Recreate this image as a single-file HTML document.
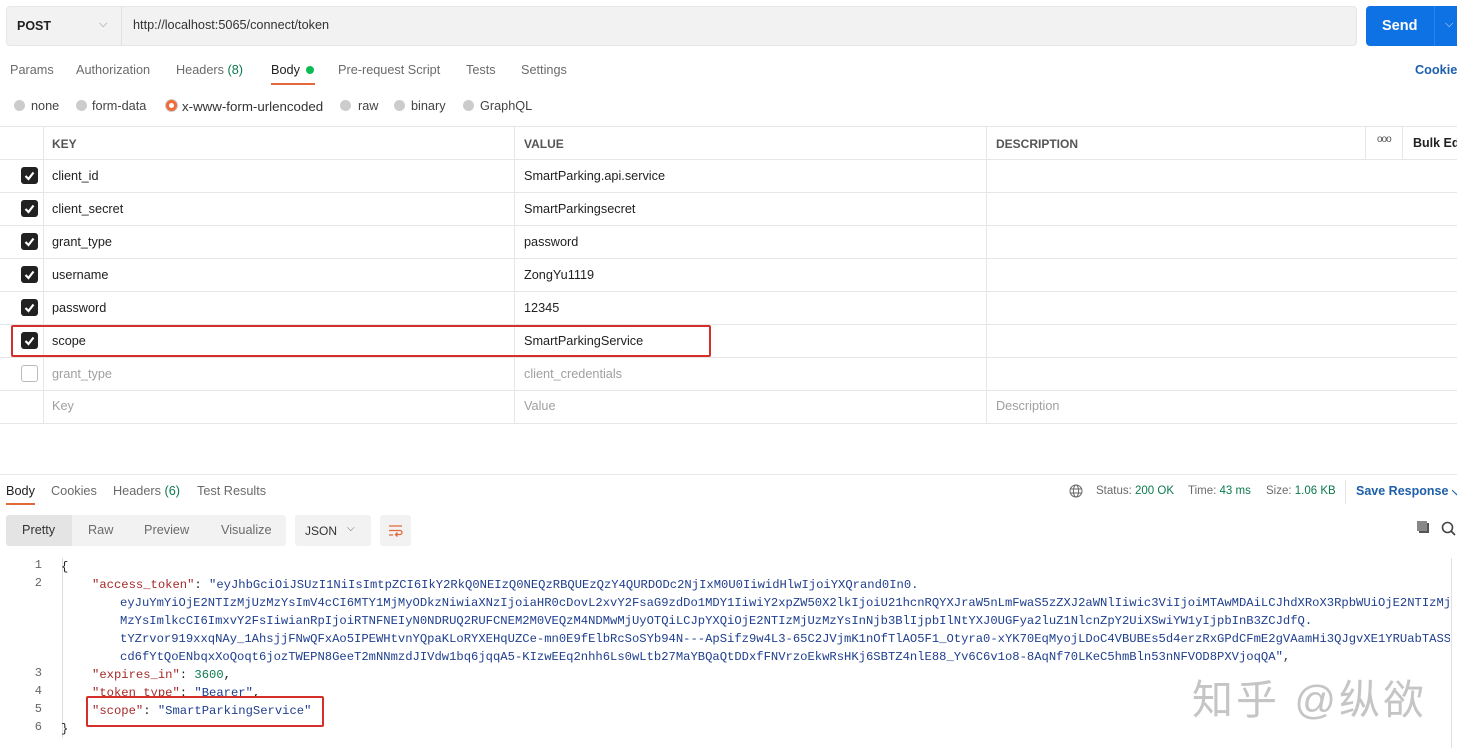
<!DOCTYPE html>
<html><head><meta charset="utf-8"><style>
*{margin:0;padding:0;box-sizing:border-box}
body{width:1457px;height:748px;overflow:hidden;background:#fff;font-family:"Liberation Sans",sans-serif;font-size:12.7px;color:#212121;position:relative}
.a{position:absolute}
.t{position:absolute;white-space:nowrap}
.cb{position:absolute;left:21px;width:17px;height:17px;border-radius:3px;background:#212121}
.cb svg{position:absolute;left:2px;top:2px}
.cbe{background:#fff;border:1px solid #bbb}
.hl{position:absolute;left:0;width:1457px;height:1px;background:#e6e6e6}
.vl{position:absolute;width:1px;background:#e6e6e6}
.code{position:absolute;font-family:"Liberation Mono",monospace;font-size:12.2px;white-space:nowrap;line-height:18px}
.k{color:#a52a2a}.s{color:#1f3f8f}.n{color:#0b7a4b}
.ln{position:absolute;left:20px;width:22px;text-align:right;font-family:"Liberation Mono",monospace;font-size:12px;color:#666}
.rad{position:absolute;width:11px;height:11px;border-radius:50%;background:#ccc;top:100px}
</style></head><body>
<div class="a" style="left:6px;top:6px;width:1351px;height:40px;background:#f2f2f2;border:1px solid #e6e6e6;border-radius:4px"></div>
<div class="a" style="left:121px;top:7px;width:1px;height:38px;background:#e0e0e0"></div>
<div class="t" style="left:17px;top:19px;font-weight:bold;font-size:12.5px">POST</div>
<div class="t" style="left:99px;top:18px;color:#888;font-size:11px">⌵</div>
<div class="t" style="left:133px;top:18px;font-size:12.7px;color:#333">http://localhost:5065/connect/token</div>
<div class="a" style="left:1366px;top:6px;width:91px;height:40px;background:#0e72e5;border-radius:4px 0 0 4px"></div>
<div class="a" style="left:1434px;top:6px;width:1px;height:40px;background:#2a82e8"></div>
<div class="t" style="left:1382px;top:18px;color:#fff;font-weight:bold;font-size:14.5px">Send</div>
<div class="t" style="left:1445px;top:18px;color:#cfe2fb;font-size:11px">⌵</div>
<div class="t" style="left:10px;top:63px;color:#6b6b6b;font-size:12.7px">Params</div>
<div class="t" style="left:76px;top:63px;color:#6b6b6b;font-size:12.7px">Authorization</div>
<div class="t" style="left:176px;top:63px;color:#6b6b6b;font-size:12.7px">Headers <span style="color:#0b7a4b">(8)</span></div>
<div class="t" style="left:271px;top:63px;color:#212121;font-size:12.7px">Body</div>
<div class="a" style="left:306px;top:66px;width:8px;height:8px;border-radius:50%;background:#0cbb52"></div>
<div class="a" style="left:271px;top:83px;width:44px;height:2px;background:#e0683a"></div>
<div class="t" style="left:338px;top:63px;color:#6b6b6b;font-size:12.7px">Pre-request Script</div>
<div class="t" style="left:466px;top:63px;color:#6b6b6b;font-size:12.7px">Tests</div>
<div class="t" style="left:521px;top:63px;color:#6b6b6b;font-size:12.7px">Settings</div>
<div class="t" style="left:1415px;top:63px;color:#1d5fa8;font-weight:bold;font-size:12.7px">Cookies</div>
<div class="rad" style="left:14px"></div><div class="t" style="left:31px;top:99px;color:#444">none</div>
<div class="rad" style="left:76px"></div><div class="t" style="left:92px;top:99px;color:#444">form-data</div>
<div class="rad" style="left:166px;background:#fff;border:3px solid #f06a3a;box-shadow:0 0 0 1px #ccc"></div><div class="t" style="left:182px;top:99px;color:#333;font-size:13.3px">x-www-form-urlencoded</div>
<div class="rad" style="left:340px"></div><div class="t" style="left:358px;top:99px;color:#444">raw</div>
<div class="rad" style="left:394px"></div><div class="t" style="left:411px;top:99px;color:#444">binary</div>
<div class="rad" style="left:463px"></div><div class="t" style="left:480px;top:99px;color:#444">GraphQL</div>
<div class="hl" style="top:126px"></div>
<div class="hl" style="top:159px"></div><div class="hl" style="top:192px"></div><div class="hl" style="top:225px"></div><div class="hl" style="top:258px"></div><div class="hl" style="top:291px"></div><div class="hl" style="top:324px"></div><div class="hl" style="top:357px"></div><div class="hl" style="top:390px"></div><div class="hl" style="top:423px"></div>
<div class="vl" style="left:43px;top:126px;height:297px"></div>
<div class="vl" style="left:514px;top:126px;height:297px"></div>
<div class="vl" style="left:986px;top:126px;height:297px"></div>
<div class="vl" style="left:1365px;top:126px;height:33px"></div>
<div class="vl" style="left:1402px;top:126px;height:33px"></div>
<div class="t" style="left:52px;top:137px;color:#555;font-weight:bold;font-size:12px">KEY</div>
<div class="t" style="left:524px;top:137px;color:#555;font-weight:bold;font-size:12px">VALUE</div>
<div class="t" style="left:996px;top:137px;color:#555;font-weight:bold;font-size:12px">DESCRIPTION</div>
<div class="t" style="left:1377px;top:134px;color:#555;font-size:10px;letter-spacing:-1px">ooo</div>
<div class="t" style="left:1413px;top:136px;color:#222;font-weight:bold;font-size:12.5px">Bulk Edit</div>

<div class="cb" style="top:167px"><svg width="13" height="13"><path d="M2.5 7 L5.5 10 L10.5 3.5" stroke="#fff" stroke-width="2.2" fill="none"/></svg></div>
<div class="t" style="left:52px;top:169px">client_id</div><div class="t" style="left:524px;top:169px">SmartParking.api.service</div>
<div class="cb" style="top:200px"><svg width="13" height="13"><path d="M2.5 7 L5.5 10 L10.5 3.5" stroke="#fff" stroke-width="2.2" fill="none"/></svg></div>
<div class="t" style="left:52px;top:202px">client_secret</div><div class="t" style="left:524px;top:202px">SmartParkingsecret</div>
<div class="cb" style="top:233px"><svg width="13" height="13"><path d="M2.5 7 L5.5 10 L10.5 3.5" stroke="#fff" stroke-width="2.2" fill="none"/></svg></div>
<div class="t" style="left:52px;top:235px">grant_type</div><div class="t" style="left:524px;top:235px">password</div>
<div class="cb" style="top:266px"><svg width="13" height="13"><path d="M2.5 7 L5.5 10 L10.5 3.5" stroke="#fff" stroke-width="2.2" fill="none"/></svg></div>
<div class="t" style="left:52px;top:268px">username</div><div class="t" style="left:524px;top:268px">ZongYu1119</div>
<div class="cb" style="top:299px"><svg width="13" height="13"><path d="M2.5 7 L5.5 10 L10.5 3.5" stroke="#fff" stroke-width="2.2" fill="none"/></svg></div>
<div class="t" style="left:52px;top:301px">password</div><div class="t" style="left:524px;top:301px">12345</div>
<div class="cb" style="top:332px"><svg width="13" height="13"><path d="M2.5 7 L5.5 10 L10.5 3.5" stroke="#fff" stroke-width="2.2" fill="none"/></svg></div>
<div class="t" style="left:52px;top:334px">scope</div><div class="t" style="left:524px;top:334px">SmartParkingService</div>
<div class="a" style="left:11px;top:325px;width:700px;height:32px;border:2.5px solid #d42f2a;border-radius:2px"></div>
<div class="cb cbe" style="top:365px"></div>
<div class="t" style="left:52px;top:367px;color:#a0a0a0">grant_type</div><div class="t" style="left:524px;top:367px;color:#a0a0a0">client_credentials</div>
<div class="t" style="left:52px;top:399px;color:#a0a0a0">Key</div><div class="t" style="left:524px;top:399px;color:#a0a0a0">Value</div><div class="t" style="left:996px;top:399px;color:#a0a0a0">Description</div>
<div class="hl" style="top:474px;background:#e8e8e8"></div>
<div class="t" style="left:6px;top:484px;font-size:12.7px">Body</div>
<div class="a" style="left:6px;top:503px;width:29px;height:2px;background:#e0683a"></div>
<div class="t" style="left:51px;top:484px;color:#6b6b6b;font-size:12.7px">Cookies</div>
<div class="t" style="left:113px;top:484px;color:#6b6b6b;font-size:12.7px">Headers <span style="color:#0b7a4b">(6)</span></div>
<div class="t" style="left:197px;top:484px;color:#6b6b6b;font-size:12.7px">Test Results</div>
<svg class="a" style="left:1069px;top:484px" width="14" height="14" viewBox="0 0 14 14"><circle cx="7" cy="7" r="6" fill="none" stroke="#666" stroke-width="1"/><ellipse cx="7" cy="7" rx="2.6" ry="6" fill="none" stroke="#666"/><path d="M1 5H13M1 9H13" stroke="#666"/></svg>
<div class="t" style="left:1096px;top:485px;color:#6b6b6b;font-size:11.5px">Status: <span style="color:#0b7a4b">200 OK</span></div>
<div class="t" style="left:1188px;top:485px;color:#6b6b6b;font-size:11.5px">Time: <span style="color:#0b7a4b">43 ms</span></div>
<div class="t" style="left:1266px;top:485px;color:#6b6b6b;font-size:11.5px">Size: <span style="color:#0b7a4b">1.06 KB</span></div>
<div class="a" style="left:1345px;top:480px;width:1px;height:24px;background:#e6e6e6"></div>
<div class="t" style="left:1356px;top:484px;color:#1d5fa8;font-weight:bold;font-size:12.5px">Save Response ⌵</div>
<div class="a" style="left:6px;top:515px;width:280px;height:31px;background:#f2f2f2;border-radius:3px"></div>
<div class="a" style="left:6px;top:515px;width:66px;height:31px;background:#e4e4e4;border-radius:3px 0 0 3px"></div>
<div class="t" style="left:22px;top:523px;font-size:12.7px;color:#333">Pretty</div>
<div class="t" style="left:88px;top:523px;font-size:12.7px;color:#6b6b6b">Raw</div>
<div class="t" style="left:144px;top:523px;font-size:12.7px;color:#6b6b6b">Preview</div>
<div class="t" style="left:221px;top:523px;font-size:12.7px;color:#6b6b6b">Visualize</div>
<div class="a" style="left:295px;top:515px;width:76px;height:31px;background:#f2f2f2;border-radius:3px"></div>
<div class="t" style="left:305px;top:524px;font-size:12px;color:#333">JSON</div>
<div class="t" style="left:347px;top:523px;font-size:10px;color:#666">⌵</div>
<div class="a" style="left:380px;top:515px;width:31px;height:31px;background:#f2f2f2;border-radius:3px"></div>
<svg class="a" style="left:387px;top:522px" width="17" height="17"><path d="M2 4H15M2 8.5H13a2 2 0 0 1 0 4H9M2 13H6M10.5 10.5L8.5 12.5L10.5 14.5" stroke="#e0683a" stroke-width="1.3" fill="none"/></svg>
<div class="a" style="left:1419px;top:523px;width:10px;height:10px;background:#555"></div>
<div class="a" style="left:1417px;top:521px;width:10px;height:10px;background:#888"></div>
<svg class="a" style="left:1441px;top:521px" width="16" height="16"><circle cx="6.5" cy="6.5" r="5" stroke="#444" stroke-width="1.6" fill="none"/><path d="M10 10L14 14" stroke="#444" stroke-width="1.8"/></svg>
<div class="a" style="left:1451px;top:558px;width:1px;height:190px;background:#e0e0e0"></div>
<div class="ln" style="top:558px">1</div><div class="ln" style="top:576px">2</div><div class="ln" style="top:666px">3</div><div class="ln" style="top:684px">4</div><div class="ln" style="top:702px">5</div><div class="ln" style="top:720px">6</div>
<div class="a" style="left:62px;top:558px;width:1px;height:180px;background:#ddd"></div>
<div class="code" style="left:61px;top:558px">{</div>
<div class="code" style="left:61px;top:720px">}</div>
<div class="code" style="left:92px;top:576px"><span class="k">"access_token"</span>: <span class="s">"eyJhbGciOiJSUzI1NiIsImtpZCI6IkY2RkQ0NEIzQ0NEQzRBQUEzQzY4QURDODc2NjIxM0U0IiwidHlwIjoiYXQrand0In0.</span></div>
<div class="code s" style="left:120px;top:594px;width:1330px;overflow:hidden">eyJuYmYiOjE2NTIzMjUzMzYsImV4cCI6MTY1MjMyODkzNiwiaXNzIjoiaHR0cDovL2xvY2FsaG9zdDo1MDY1IiwiY2xpZW50X2lkIjoiU21hcnRQYXJraW5nLmFwaS5zZXJ2aWNlIiwic3ViIjoiMTAwMDAiLCJhdXRoX3RpbWUiOjE2NTIzMjUz</div>
<div class="code s" style="left:120px;top:612px">MzYsImlkcCI6ImxvY2FsIiwianRpIjoiRTNFNEIyN0NDRUQ2RUFCNEM2M0VEQzM4NDMwMjUyOTQiLCJpYXQiOjE2NTIzMjUzMzYsInNjb3BlIjpbIlNtYXJ0UGFya2luZ1NlcnZpY2UiXSwiYW1yIjpbInB3ZCJdfQ.</div>
<div class="code s" style="left:120px;top:630px;width:1330px;overflow:hidden">tYZrvor919xxqNAy_1AhsjjFNwQFxAo5IPEWHtvnYQpaKLoRYXEHqUZCe-mn0E9fElbRcSoSYb94N---ApSifz9w4L3-65C2JVjmK1nOfTlAO5F1_Otyra0-xYK70EqMyojLDoC4VBUBEs5d4erzRxGPdCFmE2gVAamHi3QJgvXE1YRUabTASSAF</div>
<div class="code s" style="left:120px;top:648px">cd6fYtQoENbqxXoQoqt6jozTWEPN8GeeT2mNNmzdJIVdw1bq6jqqA5-KIzwEEq2nhh6Ls0wLtb27MaYBQaQtDDxfFNVrzoEkwRsHKj6SBTZ4nlE88_Yv6C6v1o8-8AqNf70LKeC5hmBln53nNFVOD8PXVjoqQA"<span style="color:#333">,</span></div>
<div class="code" style="left:92px;top:666px"><span class="k">"expires_in"</span>: <span class="n">3600</span>,</div>
<div class="code" style="left:92px;top:684px;height:12px;overflow:hidden"><span class="k">"token_type"</span>: <span class="s">"Bearer"</span>,</div>
<div class="code" style="left:92px;top:702px"><span class="k">"scope"</span>: <span class="s">"SmartParkingService"</span></div>
<div class="a" style="left:86px;top:696px;width:238px;height:31px;border:2.5px solid #d42f2a;border-radius:2px"></div>
<div class="t" style="left:1192px;top:666px;font-family:'Liberation Sans','Noto Sans CJK SC',sans-serif;font-size:41px;color:rgba(150,150,150,0.55);letter-spacing:3px">知乎 @纵欲</div>
</body></html>
